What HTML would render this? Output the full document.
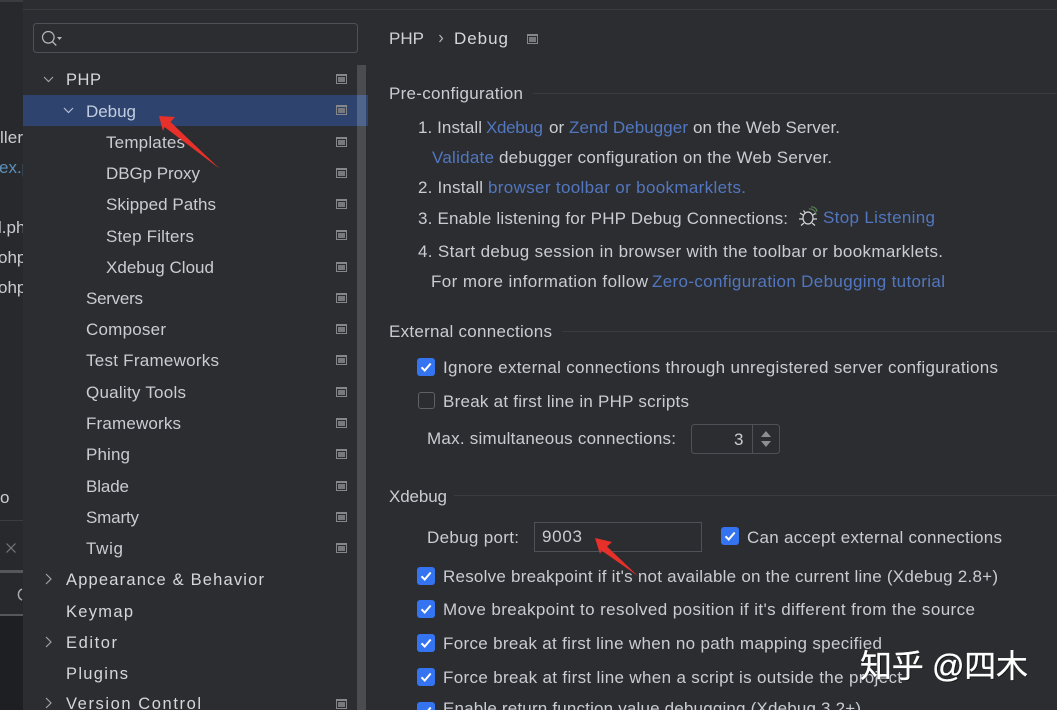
<!DOCTYPE html>
<html><head><meta charset="utf-8"><style>
html,body{margin:0;padding:0;background:#2b2d30;width:1057px;height:710px;overflow:hidden}
svg{display:block}
text{font-family:"Liberation Sans","Noto Sans CJK SC",sans-serif;font-size:17px;fill:#c9ccd1}
.b{fill:#d5d7db;font-size:16.500px}
.l{fill:#5277c0}
.s{fill:#cfd1d5}
</style></head><body>
<svg width="1057" height="710" viewBox="0 0 1057 710" xmlns="http://www.w3.org/2000/svg">
<defs>
<g id="i"><rect x="0.500" y="0.500" width="10" height="9" fill="none" stroke="#85878b"/><rect x="2" y="3" width="7" height="5" fill="#77797d"/><rect x="0" y="0" width="11" height="2" fill="#85878b"/></g>
<g id="c"><rect width="18" height="18" rx="3" fill="#3574f0"/><path d="M4.500 9.300l3.200 3.200 6-7" fill="none" stroke="#fff" stroke-width="2"/></g>
</defs>
<rect width="1057" height="710" fill="#2b2d30"/>
<!-- left strip -->
<rect width="23" height="710" fill="#28292c"/>
<rect y="0" width="23" height="2" fill="#3a3c40"/>
<g>
<text x="0" y="143" textLength="23">ller</text>
<text x="-1" y="173" style="fill:#5c8fb8">ex.p</text>
<text x="-2" y="233">l.ph</text>
<text x="-2" y="263">ohp</text>
<text x="-2" y="293">ohp</text>
<text x="0" y="503">o</text>
</g>
<rect x="0" y="520" width="23" height="1" fill="#3a3c40"/>
<path d="M6.500 543.500l9 9M15.500 543.500l-9 9" stroke="#77797d" stroke-width="1.200"/>
<rect x="0" y="570" width="23" height="3" fill="#55575a"/>
<path d="M22 589a6 6 0 0 0 0 11" stroke="#a8aaae" stroke-width="1.500" fill="none"/>
<rect x="0" y="614" width="23" height="2" fill="#55575a"/>
<rect x="0" y="616" width="23" height="94" fill="#1e1f22"/>
<rect x="23" width="1034" height="710" fill="#2b2d30"/>
<rect x="23" y="9" width="1034" height="1" fill="#393b40"/>
<!-- search -->
<rect x="33.500" y="23.500" width="324" height="29" rx="3" fill="#2b2d30" stroke="#4e5157"/>
<circle cx="48.300" cy="37.300" r="5.800" fill="none" stroke="#b4b6ba" stroke-width="1.200"/>
<path d="M52.300 41.500l4 4" stroke="#b4b6ba" stroke-width="1.300"/>
<path d="M57 37h5l-2.500 3z" fill="#b4b6ba"/>
<!-- selection + scrollbar -->
<rect x="357" y="65" width="9" height="645" fill="#4a4c4f"/>
<rect x="23" y="95" width="345" height="31" fill="#2e436e"/>
<rect x="357" y="95" width="9" height="31" fill="#50648c"/>
<!-- tree chevrons -->
<g fill="none" stroke="#a0a2a6" stroke-width="1.200">
<path d="M44 77l4.500 4.500 4.500-4.500"/>
<path d="M64 108l4.500 4.500 4.500-4.500" stroke="#b4bfd6"/>
<path d="M46 574l5 5-5 5"/>
<path d="M46 637l5 5-5 5"/>
<path d="M46 698l5 5-5 5"/>
</g>
<!-- tree -->
<text class="b" x="66" y="85" textLength="35">PHP</text>
<text x="86" y="117" textLength="50" style="fill:#c3cde0">Debug</text>
<text x="106" y="148" textLength="79">Templates</text>
<text x="106" y="179" textLength="94">DBGp Proxy</text>
<text x="106" y="210" textLength="110">Skipped Paths</text>
<text x="106" y="242" textLength="88">Step Filters</text>
<text x="106" y="273" textLength="108">Xdebug Cloud</text>
<text x="86" y="304" textLength="57">Servers</text>
<text x="86" y="335" textLength="80">Composer</text>
<text x="86" y="366" textLength="133">Test Frameworks</text>
<text x="86" y="398" textLength="100">Quality Tools</text>
<text x="86" y="429" textLength="95">Frameworks</text>
<text x="86" y="460" textLength="44">Phing</text>
<text x="86" y="492" textLength="43">Blade</text>
<text x="86" y="523" textLength="53">Smarty</text>
<text x="86" y="554" textLength="37">Twig</text>
<text class="b" x="66" y="585" textLength="198">Appearance &amp; Behavior</text>
<text class="b" x="66" y="617" textLength="67">Keymap</text>
<text class="b" x="66" y="648" textLength="51">Editor</text>
<text class="b" x="66" y="679" textLength="62">Plugins</text>
<text class="b" x="66" y="709" textLength="135">Version Control</text>
<!-- tree icons -->
<use href="#i" x="336" y="74"/><use href="#i" x="336" y="105"/><use href="#i" x="336" y="137"/><use href="#i" x="336" y="168"/><use href="#i" x="336" y="199"/><use href="#i" x="336" y="230"/><use href="#i" x="336" y="262"/><use href="#i" x="336" y="293"/><use href="#i" x="336" y="324"/><use href="#i" x="336" y="355"/><use href="#i" x="336" y="387"/><use href="#i" x="336" y="418"/><use href="#i" x="336" y="449"/><use href="#i" x="336" y="481"/><use href="#i" x="336" y="512"/><use href="#i" x="336" y="543"/><use href="#i" x="336" y="699"/>
<!-- header -->
<text class="s" x="389" y="44" textLength="35">PHP</text>
<path d="M439.500 35l3 3.500-3 3.500" fill="none" stroke="#b4b6ba" stroke-width="1.200"/>
<text class="b" x="454" y="44" textLength="54" style="font-size:17px">Debug</text>
<use href="#i" x="527" y="34"/>
<!-- Pre-config -->
<text x="389" y="99" textLength="134">Pre-configuration</text>
<rect x="533" y="93" width="524" height="1" fill="#393b40"/>
<text x="418" y="133" textLength="64">1. Install</text>
<text class="l" x="486" y="133" textLength="57">Xdebug</text>
<text x="549" y="133">or</text>
<text class="l" x="569" y="133" textLength="119">Zend Debugger</text>
<text x="693" y="133" textLength="147">on the Web Server.</text>
<text class="l" x="432" y="163" textLength="62">Validate</text>
<text x="499" y="163" textLength="333">debugger configuration on the Web Server.</text>
<text x="418" y="193" textLength="65">2. Install</text>
<text class="l" x="488" y="193" textLength="258">browser toolbar or bookmarklets.</text>
<text x="418" y="224" textLength="370">3. Enable listening for PHP Debug Connections:</text>
<!-- bug icon -->
<g fill="none" stroke="#d5d7db" stroke-width="1.200">
<ellipse cx="808" cy="218" rx="5" ry="6"/>
<path d="M803 215l-3-2M803 219h-4M804 223l-3 2.500M813 215l3-2M813 219h4M812 223l3 2.500M805 212.500l-1.500-2"/>
</g>
<path d="M809 209a6 6 0 0 1 7 6M811 207a5 5 0 0 1 6 5" fill="none" stroke="#5f8a55" stroke-width="1"/>
<text class="l" x="823" y="223" textLength="112">Stop Listening</text>
<text x="418" y="257" textLength="525">4. Start debug session in browser with the toolbar or bookmarklets.</text>
<text x="431" y="287" textLength="217">For more information follow</text>
<text class="l" x="652" y="287" textLength="293">Zero-configuration Debugging tutorial</text>
<!-- External -->
<text x="389" y="337" textLength="163">External connections</text>
<rect x="562" y="331" width="495" height="1" fill="#393b40"/>
<use href="#c" x="417" y="358"/>
<text x="443" y="373" textLength="555">Ignore external connections through unregistered server configurations</text>
<rect x="418.500" y="392.500" width="16" height="16" rx="2.500" fill="none" stroke="#5f6165"/>
<text x="443" y="407" textLength="246">Break at first line in PHP scripts</text>
<text x="427" y="444" textLength="249">Max. simultaneous connections:</text>
<rect x="691.500" y="424.500" width="88" height="29" rx="3" fill="none" stroke="#4e5157"/>
<rect x="752" y="425" width="1" height="28" fill="#4e5157"/>
<text x="734" y="445" textLength="10">3</text>
<path d="M761 437l5-6 5 6zM761 441l5 6 5-6z" fill="#8c8e92"/>
<!-- Xdebug -->
<text x="389" y="502" textLength="58">Xdebug</text>
<rect x="454" y="495" width="603" height="1" fill="#393b40"/>
<text x="427" y="543" textLength="92">Debug port:</text>
<rect x="534.500" y="522.500" width="167" height="29" fill="none" stroke="#4e5157"/>
<text x="542" y="542" textLength="40">9003</text>
<use href="#c" x="721" y="527"/>
<text x="747" y="543" textLength="255">Can accept external connections</text>
<use href="#c" x="417" y="567"/>
<text x="443" y="582" textLength="555">Resolve breakpoint if it's not available on the current line (Xdebug 2.8+)</text>
<use href="#c" x="417" y="600"/>
<text x="443" y="615" textLength="532">Move breakpoint to resolved position if it's different from the source</text>
<use href="#c" x="417" y="634"/>
<text x="443" y="649" textLength="439">Force break at first line when no path mapping specified</text>
<use href="#c" x="417" y="668"/>
<text x="443" y="683" textLength="459">Force break at first line when a script is outside the project</text>
<use href="#c" x="417" y="702"/>
<text x="443" y="714" textLength="418">Enable return function value debugging (Xdebug 3.2+)</text>
<!-- arrows -->
<path d="M159 116L175 117 170.500 122 220 169 164.500 127 163 131z" fill="#e8302a"/>
<path d="M595 538L612 542 607 546.500 638 576 601.500 550.500 600 554z" fill="#e8302a"/>
<!-- watermark -->
<text x="860" y="677" textLength="168" style="font-size:32px;fill:#000;opacity:.45" transform="translate(1 1)">知乎 @四木</text>
<text x="860" y="677" textLength="168" style="font-size:32px;fill:#fff;stroke:#fff;stroke-width:.3">知乎 @四木</text>
</svg>
</body></html>
